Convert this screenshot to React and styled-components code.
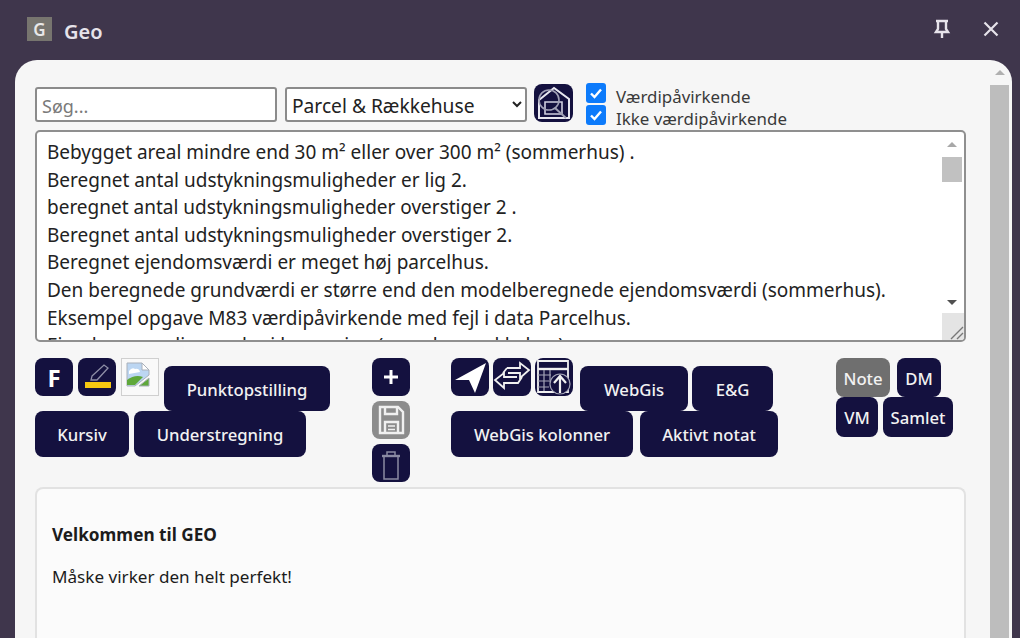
import React from "react";
import styled, { createGlobalStyle } from "styled-components";

const GlobalStyle = createGlobalStyle`
  html, body {
    margin: 0;
    height: 100%;
    overflow: hidden;
    background: #3f364c;
  }
  * {
    box-sizing: border-box;
  }
`;

const font = `"Noto Sans", "Open Sans", sans-serif`;
const navy = "#14113f";

const Page = styled.div`
  width: 1020px;
  height: 638px;
  display: flex;
  flex-direction: column;
  background: #3f364c;
  font-family: ${font};
  overflow: hidden;
`;

const TitleBar = styled.div`
  height: 60px;
  flex: none;
  display: flex;
  align-items: center;
  padding: 0 19px 0 27px;
  color: #e6e3ea;
`;

const AppBadge = styled.div`
  width: 25px;
  height: 24px;
  margin-top: -2px;
  background: #77756f;
  color: #e8e8e8;
  font-size: 17px;
  font-weight: 600;
  display: flex;
  align-items: center;
  justify-content: center;
  margin-right: 12px;
`;

const AppName = styled.div`
  font-size: 20px;
  font-weight: 600;
  flex: 1;
  margin-top: 2px;
`;

const WindowIcon = styled.svg`
  width: 20px;
  height: 20px;
  margin-left: ${(p) => p.$gap || 0}px;
  margin-top: -2px;
  display: block;
`;

const Panel = styled.div`
  flex: 1;
  margin: 0 8px 0 15px;
  background: #f6f6f6;
  border-radius: 22px 22px 0 0;
  display: flex;
  overflow: hidden;
`;

const Content = styled.div`
  flex: 1;
  padding: 24px 24px 0 20px;
  min-width: 0;
`;

const PageScroll = styled.div`
  width: 22px;
  flex: none;
  display: flex;
  flex-direction: column;
  align-items: flex-start;
`;

const ArrowSlot = styled.div`
  height: ${(p) => p.$h}px;
  width: ${(p) => p.$w || 20}px;
  flex: none;
  display: flex;
  align-items: center;
  justify-content: center;
`;

const UpArrow = styled.div`
  width: 0;
  height: 0;
  border-left: 5px solid transparent;
  border-right: 5px solid transparent;
  border-bottom: 5px solid ${(p) => p.$color || "#a8a8a8"};
`;

const DownArrow = styled(UpArrow)`
  border-bottom: none;
  border-top: 5px solid #505050;
`;

const PageThumb = styled.div`
  flex: 1;
  width: 19px;
  background: #bdbdbd;
`;

const TopRow = styled.div`
  display: flex;
  align-items: flex-start;
  height: 46px;
`;

const Search = styled.input`
  width: 242px;
  height: 35px;
  margin-top: 3px;
  border: 2px solid #8b8b8b;
  border-radius: 3px;
  background: #fff;
  padding: 2px 5px 0;
  font-family: ${font};
  font-size: 18px;
  outline: none;
  &::placeholder {
    color: #7a7a7a;
    opacity: 1;
  }
`;

const Select = styled.select`
  width: 242px;
  height: 35px;
  margin: 3px 0 0 8px;
  border: 2px solid #8b8b8b;
  border-radius: 3px;
  background: #fff;
  padding: 2px 1px 0;
  color: #222;
  font-family: ${font};
  font-size: 19.2px;
`;

const IconButton = styled.button`
  width: ${(p) => p.$w || 38}px;
  height: 38px;
  flex: none;
  padding: 0;
  border: none;
  border-radius: 8px;
  background: ${(p) => p.$bg || navy};
  color: #fff;
  display: flex;
  align-items: center;
  justify-content: center;
  margin-left: ${(p) => p.$left || 0}px;
  font-family: ${font};
  font-size: 24px;
  font-weight: 700;
`;

const Checks = styled.div`
  margin: -1px 0 0 13px;
  display: flex;
  flex-direction: column;
`;

const CheckRow = styled.label`
  display: flex;
  align-items: flex-start;
  height: 21.5px;
  color: #3a3a3a;
  font-size: 16.9px;
`;

const CheckLabel = styled.span`
  line-height: 20px;
  margin-top: 4px;
`;

const CheckBox = styled.span`
  width: 20px;
  height: 20px;
  border-radius: 3px;
  background: #0d7bfb;
  display: flex;
  align-items: center;
  justify-content: center;
  margin-right: 10px;
`;

const ListBox = styled.div`
  height: 212px;
  border: 2px solid #8f8f8f;
  border-radius: 5px;
  background: #fff;
  display: flex;
  overflow: hidden;
`;

const ListLines = styled.div`
  flex: 1;
  padding: 7px 0 0 10px;
  overflow: hidden;
`;

const ListLine = styled.div`
  font-size: 19px;
  line-height: 27.6px;
  color: #222;
  white-space: nowrap;
`;

const ListScroll = styled.div`
  width: 22px;
  flex: none;
  display: flex;
  flex-direction: column;
  align-items: flex-start;
`;

const ListThumb = styled.div`
  width: 20px;
  height: 25px;
  background: #c1c1c1;
`;

const ListSpacer = styled.div`
  flex: 1;
`;

const ResizeCorner = styled.div`
  width: 22px;
  height: 27px;
  background: #e4e4e4;
  display: flex;
  align-items: flex-end;
  justify-content: flex-end;
`;

const Tools = styled.div`
  display: flex;
  align-items: flex-start;
  margin-top: 16px;
  height: 129px;
`;

const Group = styled.div`
  flex: none;
  width: ${(p) => p.$w}px;
  margin-left: ${(p) => p.$left || 0}px;
`;

const Row = styled.div`
  display: flex;
  align-items: flex-start;
  gap: ${(p) => p.$gap ?? 5}px;
  height: ${(p) => (p.$h ? `${p.$h}px` : "auto")};
`;

const Column = styled.div`
  display: flex;
  flex-direction: column;
  gap: 5px;
  width: ${(p) => p.$w}px;
  margin-left: ${(p) => p.$left || 0}px;
  flex: none;
`;

const TextButton = styled.button`
  width: ${(p) => p.$w}px;
  height: ${(p) => p.$h || 46}px;
  flex: none;
  margin-top: ${(p) => p.$top || 0}px;
  margin-left: ${(p) => p.$left || 0}px;
  padding: 1px 0 0;
  border: none;
  border-radius: 8px;
  background: ${(p) => p.$bg || navy};
  color: #f2f2f2;
  font-family: ${font};
  font-size: 16.7px;
  font-weight: 500;
  white-space: nowrap;
`;

const BrokenImage = styled.div`
  width: 38px;
  height: 38px;
  flex: none;
  border: 1px solid #cfcfcf;
  background: #f9f9f9;
  padding: 3px 0 0 4px;
`;

const Editor = styled.div`
  height: 170px;
  border: 2px solid #e2e2e2;
  border-bottom: none;
  border-radius: 8px 8px 0 0;
  background: #fbfbfb;
  padding: 34px 15px 0;
  color: #1c1c1c;
`;

const EditorTitle = styled.div`
  font-size: 17.2px;
  font-weight: 700;
  line-height: 24px;
  margin-bottom: 18px;
`;

const EditorText = styled.div`
  font-size: 17.1px;
  line-height: 24px;
`;

const lines = [
  "Bebygget areal mindre end 30 m² eller over 300 m² (sommerhus) .",
  "Beregnet antal udstykningsmuligheder er lig 2.",
  "beregnet antal udstykningsmuligheder overstiger 2 .",
  "Beregnet antal udstykningsmuligheder overstiger 2.",
  "Beregnet ejendomsværdi er meget høj parcelhus.",
  "Den beregnede grundværdi er større end den modelberegnede ejendomsværdi (sommerhus).",
  "Eksempel opgave M83 værdipåvirkende med fejl i data Parcelhus.",
  "Ejendomsværdi mangler i beregning (parcel og rækkehus)",
];

const Tick = () => (
  <svg width="14" height="14" viewBox="0 0 14 14" fill="none">
    <path d="M2 7.5 L5.5 11 L12 3.5" stroke="#fff" strokeWidth="2.4" />
  </svg>
);

const HouseSearch = () => (
  <svg width="38" height="38" viewBox="0 0 38 38" fill="none">
    <path d="M4 16 L19 4 L34 15 V34 H4 Z" stroke="#e8e8f0" strokeWidth="2" />
    <path d="M10 18 H27 V30 H10 Z" stroke="#d0d0e0" strokeWidth="1.6" />
    <circle cx="14" cy="16" r="10" stroke="#a0a0b5" strokeWidth="1.6" />
    <path d="M20 24 L31 34" stroke="#a0a0b5" strokeWidth="2" />
  </svg>
);

const Highlighter = () => (
  <svg width="38" height="38" viewBox="0 0 38 38" fill="none">
    <path d="M14 18 L26 7 L30 10 L19 22 L13 22 Z" stroke="#8e8ea6" strokeWidth="1.3" />
    <rect x="7" y="24" width="26" height="6" fill="#f6c811" />
  </svg>
);

const BrokenPicture = () => (
  <svg width="25" height="25" viewBox="0 0 25 25">
    <path d="M1 1 H16 L23 8 V13 L9 24 H1 Z" fill="#bcd6f2" stroke="#a9b0ba" strokeWidth="1" />
    <path d="M16 1 V8 H23 Z" fill="#fff" stroke="#a9b0ba" strokeWidth="1" />
    <path d="M3 9 q3 -4 6 -2 q4 -1 5 3 l-11 2 Z" fill="#fff" />
    <path d="M1 23 V18 Q9 12 17 15 L9 23 Z" fill="#5fa83a" />
    <path d="M23 16 V24 H13 Z" fill="#5fa83a" stroke="#a9b0ba" strokeWidth="1" />
  </svg>
);

const Plus = () => (
  <svg width="18" height="18" viewBox="0 0 18 18">
    <path d="M9 2 V16 M2 9 H16" stroke="#fff" strokeWidth="3" />
  </svg>
);

const Floppy = () => (
  <svg width="38" height="38" viewBox="0 0 38 38" fill="none" stroke="#f0f0f0" strokeWidth="2.4">
    <path d="M8 6 H26 L31 11 V32 H8 Z" />
    <path d="M13 6 V13 H25 V6" />
    <path d="M13 32 V21 H26 V32" />
    <path d="M16 25 H23 M16 28.5 H23" strokeWidth="1.4" />
  </svg>
);

const Trash = () => (
  <svg width="38" height="38" viewBox="0 0 38 38" fill="none" stroke="#8a8aa3" strokeWidth="1.5">
    <path d="M10 12 H28" strokeWidth="2.4" />
    <path d="M15 11 V8 H23 V11" />
    <path d="M12 13 V35 H26 V13" />
  </svg>
);

const Send = () => (
  <svg width="38" height="38" viewBox="0 0 38 38">
    <path d="M4 22 L35 5 L24 35 L18 22 Z" fill="#fff" />
  </svg>
);

const Exchange = () => (
  <svg width="38" height="38" viewBox="0 0 38 38" fill="none" stroke="#f0f0f0" strokeWidth="1.8">
    <path d="M14 10 H27 V5 L36 12 L27 20 V15 H15" />
    <path d="M29 19 L25 25 H11 V30 L2 22 L11 15 V19 H24" />
    <path d="M14 10 L10 15" />
  </svg>
);

const TableUpload = () => (
  <svg width="38" height="38" viewBox="0 0 38 38" fill="none" stroke="#f0f0f0" strokeWidth="1.8">
    <path d="M3 3 H33 V34 H3 Z" />
    <path d="M3 11 H33" strokeWidth="2.4" />
    <path d="M3 17 H16 M3 23 H14 M3 29 H14 M9 12 V33 M15 12 V24" strokeWidth="1.2" stroke="#a5a5b8" />
    <circle cx="25" cy="26" r="10" fill="#14113f" strokeWidth="1.2" stroke="#a5a5b8" />
    <path d="M25 35 V19 M19 25 L25 18 L31 25" strokeWidth="2.2" />
  </svg>
);

export default function App() {
  return (
    <Page>
      <GlobalStyle />
      <TitleBar>
        <AppBadge>G</AppBadge>
        <AppName>Geo</AppName>
        <WindowIcon viewBox="0 0 20 20" fill="none" stroke="#e6e3ea" strokeWidth="2.4">
          <path d="M4 2 H16 M6 2 V10 L4 13 H16 L14 10 V2 M10 13 V19" />
        </WindowIcon>
        <WindowIcon $gap={29} viewBox="0 0 20 20" fill="none" stroke="#e6e3ea" strokeWidth="2.2">
          <path d="M3.5 3.5 L16.5 16.5 M16.5 3.5 L3.5 16.5" />
        </WindowIcon>
      </TitleBar>
      <Panel>
        <Content>
          <TopRow>
            <Search placeholder="Søg..." />
            <Select defaultValue="p">
              <option value="p">Parcel &amp; Rækkehuse</option>
            </Select>
            <IconButton $w={39} $left={7} title="Søg ejendom">
              <HouseSearch />
            </IconButton>
            <Checks>
              <CheckRow>
                <CheckBox>
                  <Tick />
                </CheckBox>
                <CheckLabel>Værdipåvirkende</CheckLabel>
              </CheckRow>
              <CheckRow>
                <CheckBox>
                  <Tick />
                </CheckBox>
                <CheckLabel>Ikke værdipåvirkende</CheckLabel>
              </CheckRow>
            </Checks>
          </TopRow>

          <ListBox>
            <ListLines>
              {lines.map((line) => (
                <ListLine key={line}>{line}</ListLine>
              ))}
            </ListLines>
            <ListScroll>
              <ArrowSlot $h={25}>
                <UpArrow />
              </ArrowSlot>
              <ListThumb />
              <ListSpacer />
              <ArrowSlot $h={22}>
                <DownArrow />
              </ArrowSlot>
              <ResizeCorner>
                <svg width="16" height="16" viewBox="0 0 16 16" stroke="#777" strokeWidth="1.4">
                  <path d="M15 3 L3 15 M15 9 L9 15" />
                </svg>
              </ResizeCorner>
            </ListScroll>
          </ListBox>

          <Tools>
            <Group $w={300}>
              <Row $h={53}>
                <IconButton>F</IconButton>
                <IconButton>
                  <Highlighter />
                </IconButton>
                <BrokenImage>
                  <BrokenPicture />
                </BrokenImage>
                <TextButton $w={166} $h={45} $top={8}>
                  Punktopstilling
                </TextButton>
              </Row>
              <Row>
                <TextButton $w={94}>Kursiv</TextButton>
                <TextButton $w={172}>Understregning</TextButton>
              </Row>
            </Group>

            <Column $w={38} $left={37}>
              <IconButton>
                <Plus />
              </IconButton>
              <IconButton $bg="#8c8c8c">
                <Floppy />
              </IconButton>
              <IconButton>
                <Trash />
              </IconButton>
            </Column>

            <Group $w={328} $left={41}>
              <Row $h={53} $gap={4}>
                <IconButton>
                  <Send />
                </IconButton>
                <IconButton>
                  <Exchange />
                </IconButton>
                <IconButton>
                  <TableUpload />
                </IconButton>
                <TextButton $w={108} $h={45} $top={8} $left={3}>
                  WebGis
                </TextButton>
                <TextButton $w={81} $h={45} $top={8}>
                  E&amp;G
                </TextButton>
              </Row>
              <Row $gap={7}>
                <TextButton $w={182}>WebGis kolonner</TextButton>
                <TextButton $w={138}>Aktivt notat</TextButton>
              </Row>
            </Group>

            <Group $w={117} $left={57}>
              <Row $h={39} $gap={7}>
                <TextButton $w={54} $h={39} $bg="#6f6f6f">
                  Note
                </TextButton>
                <TextButton $w={44} $h={39}>
                  DM
                </TextButton>
              </Row>
              <Row $gap={5}>
                <TextButton $w={42} $h={40}>
                  VM
                </TextButton>
                <TextButton $w={70} $h={40}>
                  Samlet
                </TextButton>
              </Row>
            </Group>
          </Tools>

          <Editor>
            <EditorTitle>Velkommen til GEO</EditorTitle>
            <EditorText>Måske virker den helt perfekt!</EditorText>
          </Editor>
        </Content>
        <PageScroll>
          <ArrowSlot $h={25}>
            <UpArrow $color="#b0b0b0" />
          </ArrowSlot>
          <PageThumb />
        </PageScroll>
      </Panel>
    </Page>
  );
}
